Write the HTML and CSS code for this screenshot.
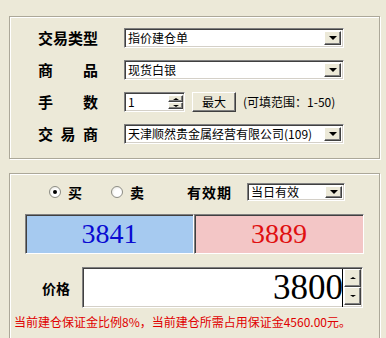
FILE: index.html
```html
<!DOCTYPE html>
<html>
<head>
<meta charset="utf-8">
<link rel="stylesheet" href="styles.css">
</head>
<body>
<div class="panel p1">
  <div class="row">
    <div class="lbl"><span>交</span><span>易</span><span>类</span><span>型</span></div>
    <div class="combo wide"><span class="ctext">指价建仓单</span><span class="ddbtn"><i class="tri-down"></i></span></div>
  </div>
  <div class="row">
    <div class="lbl"><span>商</span><span>品</span></div>
    <div class="combo wide"><span class="ctext">现货白银</span><span class="ddbtn"><i class="tri-down"></i></span></div>
  </div>
  <div class="row">
    <div class="lbl"><span>手</span><span>数</span></div>
    <div class="spinbox"><span class="ctext">1</span><span class="spins"><span class="sbtn"><i class="tri-up sm"></i></span><span class="sbtn"><i class="tri-down sm"></i></span></span></div>
    <div class="btn">最大</div>
    <span class="hint">(可填范围：1-50)</span>
  </div>
  <div class="row">
    <div class="lbl"><span>交</span><span>易</span><span>商</span></div>
    <div class="combo wide"><span class="ctext">天津顺然贵金属经营有限公司(109)</span><span class="ddbtn"><i class="tri-down"></i></span></div>
  </div>
</div>
<div class="panel p2">
  <div class="trow">
    <span class="radio checked"><i></i></span>
    <span class="rlbl">买</span>
    <span class="radio r2"></span>
    <span class="rlbl">卖</span>
    <span class="vlbl">有效期</span>
    <div class="combo narrow"><span class="ctext">当日有效</span><span class="ddbtn"><i class="tri-down"></i></span></div>
  </div>
  <div class="quotes">
    <div class="q buy">3841</div>
    <div class="q sell">3889</div>
  </div>
  <div class="prow">
    <span class="plbl">价格</span>
    <div class="pbox">
      <span class="pval">3800</span>
      <span class="caret"></span>
      <span class="pspins"><span class="pbtn"><i class="tri-up sm"></i></span><span class="pbtn"><i class="tri-down sm"></i></span></span>
    </div>
  </div>
  <div class="note">当前建仓保证金比例8%，当前建仓所需占用保证金4560.00元。</div>
</div>
</body>
</html>
```
FILE: styles.css
```css
* { box-sizing: border-box; }
html, body { height: 100%; }
body {
  margin: 0;
  padding: 16px 0 0 9px;
  background: #ece9d8;
  font-family: "Noto Sans CJK SC", "Liberation Sans", sans-serif;
  color: #000;
  overflow: hidden;
}
.panel {
  width: 371px;
  border: 1px solid #aca899;
  box-shadow: inset 1px 1px 0 #fff, 1px 1px 0 #fff;
}
.p1 {
  padding: 11px 0 14px 28px;
  display: flex;
  flex-direction: column;
  gap: 12px;
}
.row {
  display: flex;
  align-items: center;
  height: 20px;
}
.lbl {
  width: 60px;
  display: flex;
  justify-content: space-between;
  font-size: 15px;
  font-weight: bold;
  line-height: 20px;
  margin-right: 26px;
}
.combo {
  position: relative;
  display: flex;
  align-items: center;
  background: #fff;
  border: 1px solid;
  border-color: #808080 #fff #fff #808080;
  box-shadow: inset 1px 1px 0 #404040, inset -1px -1px 0 #d4d0c8;
  padding: 0 2px 0 3px;
}
.combo.wide { width: 220px; height: 20px; }
.combo.narrow { width: 98px; height: 18px; }
.ctext {
  flex: 1;
  font-size: 12px;
  line-height: 16px;
  white-space: nowrap;
}
.ddbtn {
  width: 17px;
  height: calc(100% - 4px);
  display: flex;
  align-items: center;
  justify-content: center;
  background: #ece9d8;
  border: 1px solid;
  border-color: #fff #404040 #404040 #fff;
  box-shadow: inset -1px -1px 0 #808080;
}
.tri-down {
  width: 0; height: 0;
  border-left: 4px solid transparent;
  border-right: 4px solid transparent;
  border-top: 4px solid #000;
}
.tri-up {
  width: 0; height: 0;
  border-left: 4px solid transparent;
  border-right: 4px solid transparent;
  border-bottom: 4px solid #000;
}
.tri-down.sm { border-left-width: 3px; border-right-width: 3px; border-top-width: 2px; }
.tri-up.sm { border-left-width: 3px; border-right-width: 3px; border-bottom-width: 2px; }
.spinbox {
  width: 61px;
  height: 20px;
  display: flex;
  align-items: center;
  background: #fff;
  border: 1px solid;
  border-color: #808080 #fff #fff #808080;
  box-shadow: inset 1px 1px 0 #404040, inset -1px -1px 0 #d4d0c8;
  padding: 2px 1px 2px 3px;
}
.spins {
  width: 15px;
  height: 100%;
  display: flex;
  flex-direction: column;
}
.sbtn, .pbtn {
  flex: 1;
  display: flex;
  align-items: center;
  justify-content: center;
  background: #ece9d8;
  border: 1px solid;
  border-color: #fff #404040 #404040 #fff;
  box-shadow: inset -1px -1px 0 #808080;
}
.btn {
  margin-left: 7px;
  width: 44px;
  height: 20px;
  display: flex;
  align-items: center;
  justify-content: center;
  font-size: 12px;
  line-height: 16px;
  background: #ece9d8;
  border: 1px solid;
  border-color: #fff #404040 #404040 #fff;
  box-shadow: inset -1px -1px 0 #808080;
}
.hint {
  margin-left: 7px;
  font-size: 12px;
  line-height: 16px;
  white-space: nowrap;
}
.p2 {
  margin-top: 14px;
  height: 166px;
  padding: 9px 0 0 4px;
}
.trow {
  display: flex;
  align-items: center;
  height: 18px;
  margin-left: 35px;
}
.radio {
  width: 12px;
  height: 12px;
  border-radius: 50%;
  border: 1px solid #8d8d85;
  background: radial-gradient(circle at 60% 60%, #fff 40%, #e2e0d6 100%);
  display: flex;
  align-items: center;
  justify-content: center;
}
.radio i {
  width: 4px;
  height: 4px;
  border-radius: 50%;
  background: #000;
}
.r2 { margin-left: 29px; }
.rlbl {
  margin-left: 7px;
  font-size: 14px;
  font-weight: bold;
  line-height: 18px;
}
.vlbl {
  margin-left: 43px;
  margin-right: 15px;
  font-size: 14px;
  font-weight: bold;
  line-height: 18px;
  letter-spacing: 1px;
}
.quotes {
  display: flex;
  margin: 13px 0 0 11px;
}
.q {
  height: 40px;
  display: flex;
  align-items: center;
  justify-content: center;
  font-family: "Liberation Serif", serif;
  font-size: 28px;
  border: 1px solid;
  border-color: #808080 #fff #fff #808080;
  box-shadow: inset 1px 1px 0 #404040;
}
.buy { width: 169px; background: #a6caf0; color: #0a0ad2; }
.sell { width: 170px; background: #f3c6c6; color: #e01010; }
.prow {
  display: flex;
  align-items: center;
  margin: 13px 0 0 28px;
}
.plbl {
  font-size: 14px;
  font-weight: bold;
  line-height: 18px;
  margin-right: 12px;
}
.pbox {
  position: relative;
  width: 281px;
  height: 41px;
  display: flex;
  align-items: stretch;
  background: #fff;
  border: 1px solid;
  border-color: #808080 #fff #fff #808080;
  box-shadow: inset 1px 1px 0 #404040, inset -1px -1px 0 #d4d0c8;
  padding: 1px 1px 2px 2px;
}
.pval {
  flex: 1;
  text-align: right;
  font-family: "Liberation Serif", serif;
  font-size: 35px;
  line-height: 38px;
  padding-right: 1px;
}
.caret {
  position: absolute;
  left: 259px;
  top: 1px;
  width: 1px;
  height: 38px;
  background: #000;
}
.pspins {
  width: 17px;
  display: flex;
  flex-direction: column;
}
.note {
  margin-top: 7px;
  font-size: 12px;
  line-height: 14px;
  color: #e00000;
  white-space: nowrap;
}
```
